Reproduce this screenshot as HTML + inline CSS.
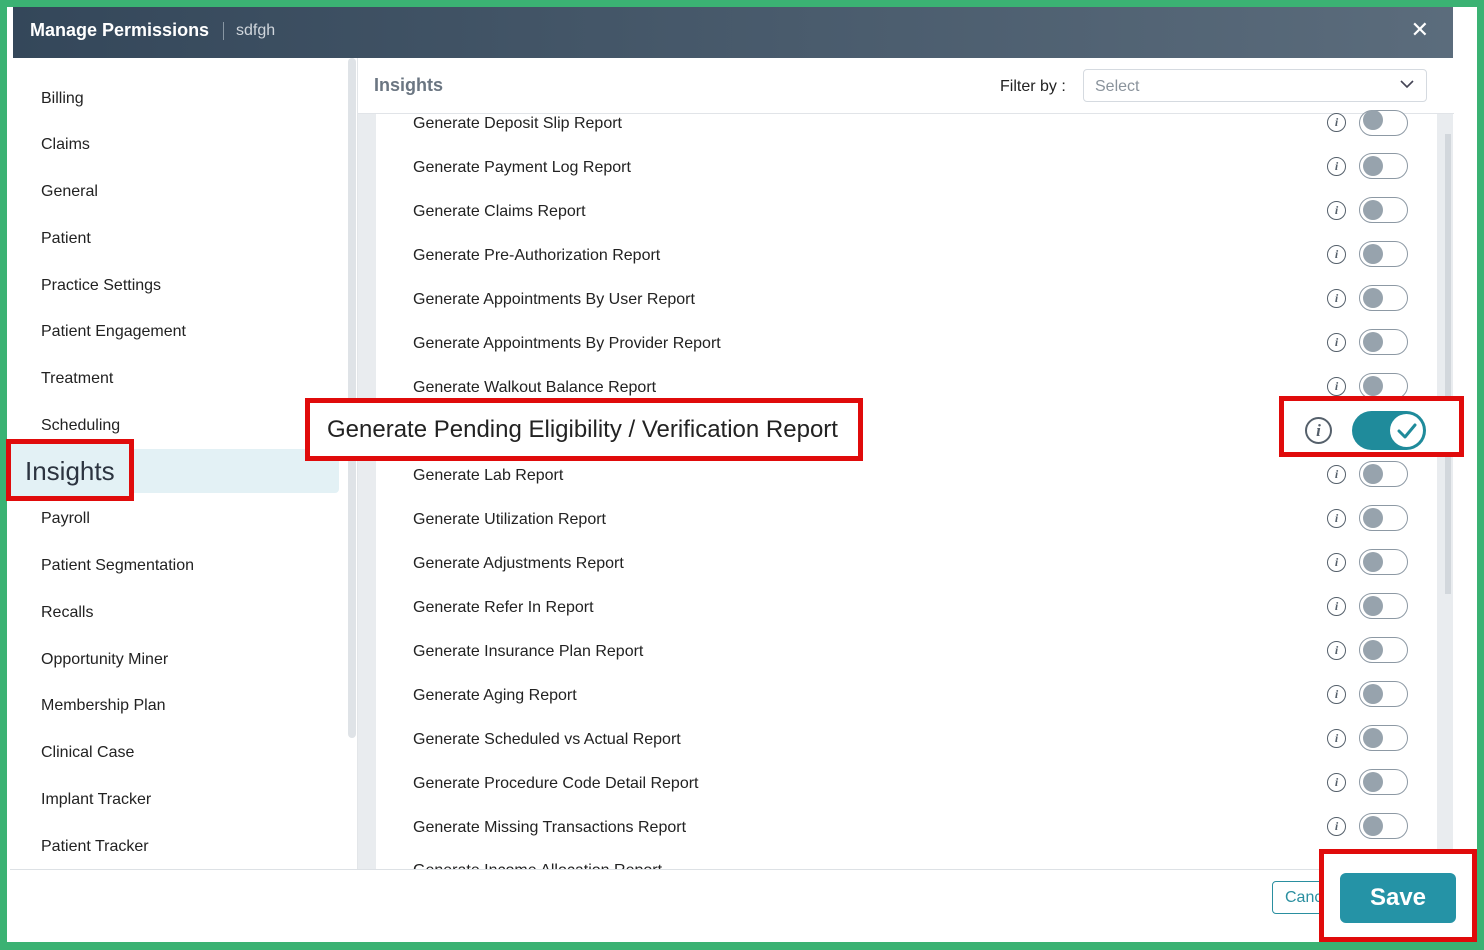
<!DOCTYPE html>
<html><head><style>
*{box-sizing:border-box;margin:0;padding:0}
body{width:1484px;height:950px;background:#3bb273;position:relative;overflow:hidden;font-family:"Liberation Sans",sans-serif}
.win{position:absolute;left:7px;top:7px;width:1470px;height:935px;background:#fff}
.hdr{position:absolute;left:6px;top:0;width:1440px;height:51px;background:linear-gradient(90deg,#34475a,#5b6c7c)}
.hdr .t{position:absolute;left:17px;top:13px;color:#fff;font-weight:bold;font-size:18px}
.hdr .s{position:absolute;left:210px;top:15px;color:#d0d6dc;font-size:16px;border-left:1px solid #8896a3;padding-left:12px}
.hdr .x{position:absolute;right:24px;top:10px;color:#fff;font-size:22px}
.side{position:absolute;left:0;top:53px;width:341px}
.side div{position:absolute;left:34px;font-size:16px;color:#222;white-space:nowrap}
.sb1{position:absolute;left:341px;top:51px;width:8px;height:680px;background:#dfe3e7;border-radius:4px}
.main{position:absolute;left:350px;top:51px;width:1096px;height:811px;border-left:1px solid #e3e6e9}
.ttl{position:absolute;left:16px;top:17px;font-size:18px;font-weight:bold;color:#6b7682}
.flt{position:absolute;left:642px;top:20px;font-size:16px;color:#222}
.sel{position:absolute;left:725px;top:11px;width:344px;height:33px;border:1px solid #d5dae0;border-radius:4px;color:#8a939c;font-size:16px;padding:8px 11px}
.strip{position:absolute;left:0;top:56px;width:18px;height:755px;background:#e9ecef}
.hline{position:absolute;left:0;top:55px;width:1096px;height:1px;background:#e1e4e8}
.sb2{position:absolute;left:1079px;top:56px;width:16px;height:755px;background:#e9ecef}
.sb2 i{position:absolute;left:8px;top:20px;width:6px;height:460px;background:#d2d7dc}
.row{position:absolute;left:413px;font-size:16px;color:#222;white-space:nowrap;margin-top:2px}
.ic{position:absolute;left:1327px;width:19px;height:19px;border:1.5px solid #55606b;border-radius:50%;font:italic bold 12px "Liberation Serif",serif;color:#55606b;text-align:center;line-height:16px}
.tg{position:absolute;left:1359px;width:49px;height:26px;border:1.5px solid #8d99a4;border-radius:13px;background:#fff}
.tg i{position:absolute;left:3px;top:2px;width:20px;height:20px;border-radius:50%;background:#97a3ad}
.foot{position:absolute;left:3px;top:862px;width:1467px;height:1px;background:#dde1e5}
.red{position:absolute;border:5px solid #e00b0b}
</style></head><body>
<div class="win">
<div class="hdr"><span class="t">Manage Permissions</span><span class="s">sdfgh</span><span class="x">✕</span></div>
<div class="side">
<div style="top:30px">Billing</div><div style="top:76px">Claims</div><div style="top:123px">General</div><div style="top:170px">Patient</div><div style="top:217px">Practice Settings</div><div style="top:263px">Patient Engagement</div><div style="top:310px">Treatment</div><div style="top:357px">Scheduling</div>
<span style="position:absolute;left:6px;top:389px;width:326px;height:44px;background:#e3f1f5;border-radius:4px"></span>
<div style="top:450px">Payroll</div><div style="top:497px">Patient Segmentation</div><div style="top:544px">Recalls</div><div style="top:591px">Opportunity Miner</div><div style="top:637px">Membership Plan</div><div style="top:684px">Clinical Case</div><div style="top:731px">Implant Tracker</div><div style="top:778px">Patient Tracker</div>
</div>
<div class="sb1"></div>
<div class="main"><div class="ttl">Insights</div><div class="flt">Filter by :</div><div class="sel">Select<svg style="position:absolute;right:12px;top:10px" width="14" height="9"><path d="M1 1l6 6 6-6" fill="none" stroke="#445" stroke-width="1.6"/></svg></div><div class="hline"></div><div class="strip"></div><div class="sb2"><i></i></div></div>
<div class="foot"></div>
<div style="position:absolute;left:1265px;top:874px;width:60px;height:33px;border:1px solid #2a8fa0;border-radius:4px;color:#2a8fa0;font-size:16px;padding:7px 12px">Canc</div>
</div>
<div class="row" style="top:113px">Generate Deposit Slip Report</div>
<div class="row" style="top:157px">Generate Payment Log Report</div>
<div class="row" style="top:201px">Generate Claims Report</div>
<div class="row" style="top:245px">Generate Pre-Authorization Report</div>
<div class="row" style="top:289px">Generate Appointments By User Report</div>
<div class="row" style="top:333px">Generate Appointments By Provider Report</div>
<div class="row" style="top:377px">Generate Walkout Balance Report</div>
<div class="row" style="top:465px">Generate Lab Report</div>
<div class="row" style="top:509px">Generate Utilization Report</div>
<div class="row" style="top:553px">Generate Adjustments Report</div>
<div class="row" style="top:597px">Generate Refer In Report</div>
<div class="row" style="top:641px">Generate Insurance Plan Report</div>
<div class="row" style="top:685px">Generate Aging Report</div>
<div class="row" style="top:729px">Generate Scheduled vs Actual Report</div>
<div class="row" style="top:773px">Generate Procedure Code Detail Report</div>
<div class="row" style="top:817px">Generate Missing Transactions Report</div>
<div class="row" style="top:860px;height:7px;overflow:hidden">Generate Income Allocation Report</div>
<div class="ic" style="top:113px">i</div><div class="tg" style="top:110px"><i style="top:-1px"></i></div>
<div class="ic" style="top:157px">i</div><div class="tg" style="top:153px"><i></i></div>
<div class="ic" style="top:201px">i</div><div class="tg" style="top:197px"><i></i></div>
<div class="ic" style="top:245px">i</div><div class="tg" style="top:241px"><i></i></div>
<div class="ic" style="top:289px">i</div><div class="tg" style="top:285px"><i></i></div>
<div class="ic" style="top:333px">i</div><div class="tg" style="top:329px"><i></i></div>
<div class="ic" style="top:377px">i</div><div class="tg" style="top:373px"><i></i></div>
<div class="ic" style="top:465px">i</div><div class="tg" style="top:461px"><i></i></div>
<div class="ic" style="top:509px">i</div><div class="tg" style="top:505px"><i></i></div>
<div class="ic" style="top:553px">i</div><div class="tg" style="top:549px"><i></i></div>
<div class="ic" style="top:597px">i</div><div class="tg" style="top:593px"><i></i></div>
<div class="ic" style="top:641px">i</div><div class="tg" style="top:637px"><i></i></div>
<div class="ic" style="top:685px">i</div><div class="tg" style="top:681px"><i></i></div>
<div class="ic" style="top:729px">i</div><div class="tg" style="top:725px"><i></i></div>
<div class="ic" style="top:773px">i</div><div class="tg" style="top:769px"><i></i></div>
<div class="ic" style="top:817px">i</div><div class="tg" style="top:813px"><i></i></div>
<div style="position:absolute;left:305px;top:398px;width:558px;height:63px;background:#fff"></div>
<div class="red" style="left:305px;top:398px;width:558px;height:63px"></div>
<div style="position:absolute;left:327px;top:416px;font-size:24px;color:#222;white-space:nowrap">Generate Pending Eligibility / Verification Report</div>
<div style="position:absolute;left:1279px;top:396px;width:185px;height:61px;background:#fff"></div>
<div class="red" style="left:1279px;top:396px;width:185px;height:61px"></div>
<div class="ic" style="left:1305px;top:417px;width:27px;height:27px;font-size:17px;line-height:24px;border-width:2px">i</div>
<div style="position:absolute;left:1352px;top:411px;width:74px;height:39px;border-radius:20px;background:#1f8b9b"><div style="position:absolute;right:3px;top:3px;width:33px;height:33px;border-radius:50%;background:#fff"><svg width="33" height="33"><path d="M9 17l6 6 10-12" fill="none" stroke="#1f8b9b" stroke-width="3" stroke-linecap="round" stroke-linejoin="round"/></svg></div></div>
<div class="red" style="left:6px;top:439px;width:128px;height:62px;background:#e3f1f5"></div>
<div style="position:absolute;left:25px;top:456px;font-size:26px;color:#2c3440">Insights</div>
<div class="red" style="left:1319px;top:849px;width:158px;height:93px;background:#fff"></div>
<div style="position:absolute;left:1340px;top:873px;width:116px;height:50px;background:#2593a6;border-radius:6px;color:#fff;font-size:24px;font-weight:bold;text-align:center;line-height:50px">Save</div>
</body></html>
